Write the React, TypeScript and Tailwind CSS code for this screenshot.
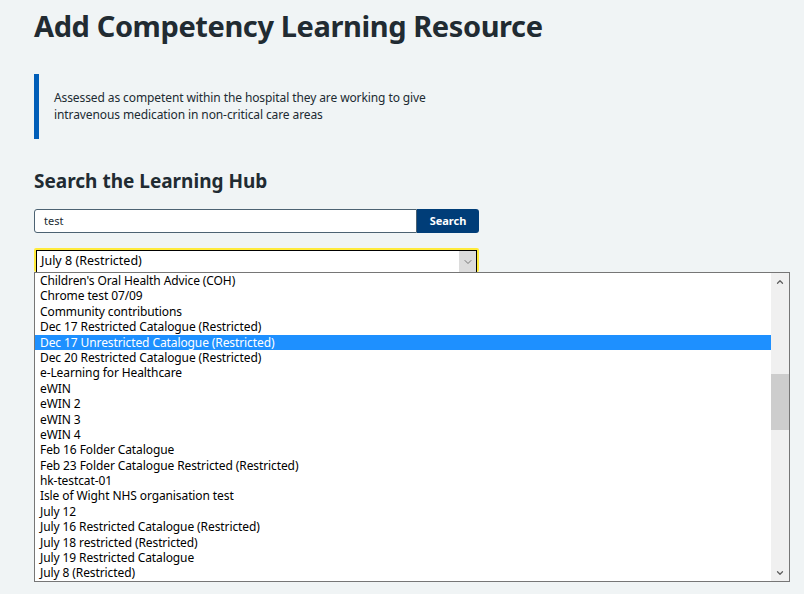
import { ChevronDown, ChevronUp } from "lucide-react";

const catalogues = [
  "Children's Oral Health Advice (COH)",
  "Chrome test 07/09",
  "Community contributions",
  "Dec 17 Restricted Catalogue (Restricted)",
  "Dec 17 Unrestricted Catalogue (Restricted)",
  "Dec 20 Restricted Catalogue (Restricted)",
  "e-Learning for Healthcare",
  "eWIN",
  "eWIN 2",
  "eWIN 3",
  "eWIN 4",
  "Feb 16 Folder Catalogue",
  "Feb 23 Folder Catalogue Restricted (Restricted)",
  "hk-testcat-01",
  "Isle of Wight NHS organisation test",
  "July 12",
  "July 16 Restricted Catalogue (Restricted)",
  "July 18 restricted (Restricted)",
  "July 19 Restricted Catalogue",
  "July 8 (Restricted)",
];

const selected = "Dec 17 Unrestricted Catalogue (Restricted)";

export default function App() {
  return (
    <div
      className="min-h-screen bg-[#f0f4f5] pl-[34px] pt-[6px] text-[#212b32]"
      style={{ fontFamily: '"Noto Sans", "Liberation Sans", sans-serif' }}
    >
      <h1 className="text-[29px] font-bold leading-[40px] tracking-[-0.4px]">
        Add Competency Learning Resource
      </h1>

      <div className="mt-[28px] flex h-[65px] w-[420px] border-l-[5px] border-[#005eb8] pl-[15px] pt-[15px]">
        <p className="text-[12px] leading-[17px] tracking-[-0.1px]">
          Assessed as competent within the hospital they are working to give intravenous medication in
          non-critical care areas
        </p>
      </div>

      <h2 className="mt-[29px] text-[19px] font-bold leading-[26px]">Search the Learning Hub</h2>

      <div className="mt-[15px] flex h-[24px] w-[445px]">
        <div className="flex flex-1 items-center rounded-l-[3px] border border-[#4c6272] bg-white pl-[9px] text-[11px]">
          test
        </div>
        <button className="w-[62px] rounded-r-[3px] bg-[#003d78] text-[11px] font-bold text-white">
          Search
        </button>
      </div>

      <div className="mt-[15px] w-[445px] rounded-[2px] bg-[#ffeb3b] p-[2px] pb-0">
        <div className="flex h-[22px] items-center border border-b-0 border-black bg-white pl-[4px] text-[12.5px] text-black">
          <span className="flex-1">July 8 (Restricted)</span>
          <span className="flex h-full w-[17px] items-center justify-center bg-[#dcdcdc]">
            <ChevronDown className="h-[12px] w-[12px] text-[#777]" strokeWidth={2} />
          </span>
        </div>
      </div>

      <div className="flex h-[310px] w-[756px] border border-[#767676] bg-white">
        <ul className="flex-1">
          {catalogues.map((c) => (
            <li
              key={c}
              className={`h-[15.4px] pl-[5px] text-[12px] leading-[15.4px] tracking-[-0.1px] ${
                c === selected ? "bg-[#1e90ff] text-white" : "text-black"
              }`}
            >
              {c}
            </li>
          ))}
        </ul>
        <div className="flex w-[18px] flex-col bg-[#f0f0f0]">
          <div className="flex h-[17px] items-center justify-center">
            <ChevronUp className="h-[10px] w-[10px] text-[#606060]" strokeWidth={3} />
          </div>
          <div className="mt-[84px] h-[56px] bg-[#cdcdcd]" />
          <div className="flex-1" />
          <div className="flex h-[17px] items-center justify-center">
            <ChevronDown className="h-[10px] w-[10px] text-[#606060]" strokeWidth={3} />
          </div>
        </div>
      </div>
    </div>
  );
}
